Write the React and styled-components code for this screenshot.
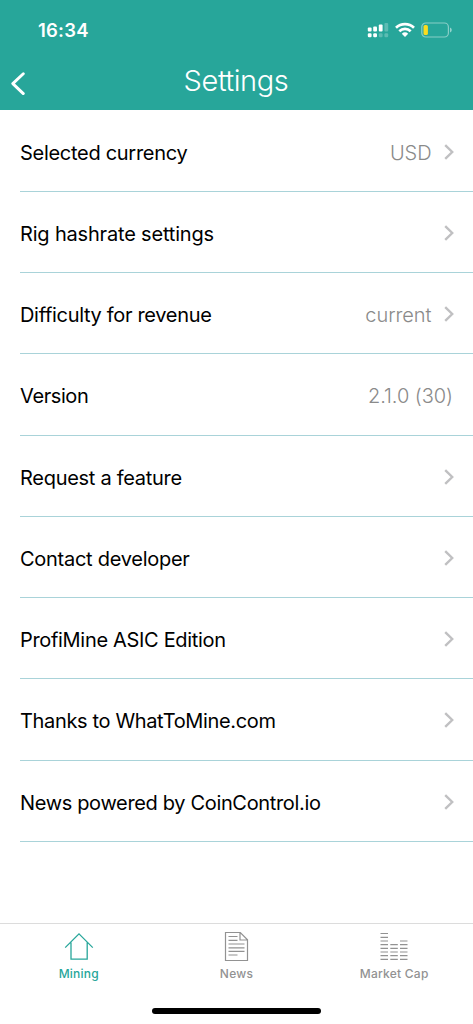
import React, { Component } from 'react';
import styled, { createGlobalStyle } from 'styled-components';

const GlobalStyle = createGlobalStyle`
    body {
        margin: 0;
        background: #fff;
        font-family: Inter, "Liberation Sans", sans-serif;
    }
`;

const Screen = styled.div`
    display: flex;
    flex-direction: column;
    height: 1024px;
    overflow: hidden;
    background: #fff;
`;

const Header = styled.header`
    height: 110px;
    background: #27a69a;
    color: #fff;
`;

const StatusBar = styled.div`
    display: flex;
    justify-content: space-between;
    align-items: center;
    height: 60px;
    padding: 0 21.5px 0 38px;
`;

const Time = styled.span`
    font-size: 18.5px;
    font-weight: 600;
    letter-spacing: 0.2px;
`;

const StatusIcons = styled.div`
    display: flex;
    align-items: center;
    gap: 6px;
    svg {
        display: block;
    }
`;

const NavBar = styled.div`
    display: grid;
    grid-template-columns: 60px 1fr 60px;
    height: 50px;
`;

const BackButton = styled.button`
    display: flex;
    align-items: flex-start;
    border: 0;
    padding: 11px 0 0 8.5px;
    background: none;
`;

const Title = styled.h1`
    margin: 0;
    text-align: center;
    font-size: 29px;
    font-weight: 300;
    line-height: 42px;
    letter-spacing: -0.4px;
    padding-right: 1px;
`;

const List = styled.ul`
    flex: 1;
    margin: 0;
    padding: 0.5px 0 0 20px;
    list-style: none;
`;

const Row = styled.li`
    display: flex;
    align-items: center;
    box-sizing: border-box;
    height: 81.25px;
    padding: 4px 20px 0 0;
    border-bottom: 1px solid #a9d3d9;
`;

const Label = styled.span`
    flex: 1;
    color: #000;
    font-size: 20px;
    letter-spacing: ${(props) => props.$spacing}px;
`;

const Value = styled.span`
    color: #8a8a8a;
    font-size: 20px;
    font-weight: 300;
    letter-spacing: -0.05px;
`;

const Chevron = styled.svg`
    display: block;
    margin: -2px -0.5px 0 12px;
`;

const TabBar = styled.nav`
    display: grid;
    grid-template-columns: repeat(3, 1fr);
    box-sizing: border-box;
    height: 79px;
    border-top: 1px solid #dcdcdc;
`;

const Tab = styled.div`
    display: flex;
    flex-direction: column;
    align-items: center;
    padding-top: 7px;
    color: ${(props) => (props.$active ? '#27a69a' : '#929292')};
    font-size: 12px;
    font-weight: 500;
    line-height: 16px;
    letter-spacing: 0.25px;
    svg {
        display: block;
        margin-bottom: 5px;
    }
`;

const HomeArea = styled.div`
    display: flex;
    justify-content: center;
    height: 22px;
    padding-top: 6px;
    box-sizing: border-box;
`;

const HomeIndicator = styled.div`
    width: 169px;
    height: 6px;
    border-radius: 3px;
    background: #000;
`;

const rows = [
    { label: 'Selected currency', value: 'USD', link: true, spacing: -0.29 },
    { label: 'Rig hashrate settings', link: true, spacing: -0.18 },
    { label: 'Difficulty for revenue', value: 'current', link: true, spacing: -0.32 },
    { label: 'Version', value: '2.1.0 (30)', spacing: -0.4 },
    { label: 'Request a feature', link: true, spacing: -0.28 },
    { label: 'Contact developer', link: true, spacing: -0.27 },
    { label: 'ProfiMine ASIC Edition', link: true, spacing: -0.32 },
    { label: 'Thanks to WhatToMine.com', link: true, spacing: -0.35 },
    { label: 'News powered by CoinControl.io', link: true, spacing: -0.34 },
];

const SignalIcon = () => (
    <svg width="22" height="16" viewBox="0 0 22 16" fill="#fff">
        <rect x="0.8" y="5.6" width="3.8" height="4" rx="1" />
        <rect x="6.2" y="4.6" width="3.8" height="5" rx="1" />
        <rect x="11.8" y="2.6" width="3.8" height="7" rx="1" />
        <rect x="17.4" y="1" width="3.8" height="8.6" rx="1" opacity="0.25" />
        <rect x="0.8" y="11.2" width="3.8" height="4" rx="1.2" />
        <rect x="6.2" y="11.2" width="3.8" height="4" rx="1.2" />
        <rect x="11.8" y="11.2" width="3.8" height="4" rx="1.2" opacity="0.25" />
        <rect x="17.4" y="11.2" width="3.8" height="4" rx="1.2" opacity="0.25" />
    </svg>
);

const WifiIcon = () => (
    <svg width="20" height="16" viewBox="0 0 20 16" fill="none" stroke="#fff" strokeWidth="2.7">
        <path d="M1 5.7C6 .9 14 .9 19 5.7" />
        <path d="M4.3 9.2C7.5 6.2 12.5 6.2 15.7 9.2" />
        <path d="M6.8 11.7Q10 8.9 13.2 11.7L10 15Z" fill="#fff" stroke="none" />
    </svg>
);

const BatteryIcon = () => (
    <svg width="31" height="16" viewBox="0 0 31 16" fill="none">
        <rect x="0.8" y="1" width="26.6" height="14" rx="4" stroke="#fff" strokeOpacity="0.45" strokeWidth="1.2" />
        <path d="M29 5.6Q30.8 6.4 30.8 8T29 10.4Z" fill="#fff" fillOpacity="0.5" />
        <rect x="2.5" y="3" width="4.4" height="10" rx="1.6" fill="#fbdc1d" />
    </svg>
);

const MiningIcon = () => (
    <svg width="30" height="30" viewBox="0 0 30 30" fill="none" stroke="currentColor" strokeWidth="1.3">
        <path d="M1.2 16.6L15 2.8L28.8 16.6M7 11.5V28.2H23.2V11.5" />
    </svg>
);

const NewsIcon = () => (
    <svg width="26" height="30" viewBox="0 0 26 30" fill="none" stroke="currentColor" strokeWidth="1.2">
        <path d="M2.5 1.5H17.3L24.5 8.8V29.5H2.5ZM17 1.5V9H24.4" />
        <path d="M5.5 5.5H14.5M5.5 9.3H14.5M5.5 13H21.5M5.5 16.8H21.5M5.5 20.4H21.5M5.5 24H14.5" />
    </svg>
);

const MarketIcon = () => (
    <svg width="28" height="30" viewBox="0 0 28 30" fill="none" stroke="currentColor" strokeWidth="1.2">
        <path d="M.5 2.5H8M.5 6.3H8M.5 10H8M.5 13.7H8M.5 17.4H8M.5 21H8M.5 24.7H8M.5 28.3H8" />
        <path d="M10.3 13.7H17.8M10.3 17.4H17.8M10.3 21H17.8M10.3 24.7H17.8M10.3 28.3H17.8" />
        <path d="M20 10H27.5M20 13.7H27.5M20 17.4H27.5M20 21H27.5M20 24.7H27.5M20 28.3H27.5" />
    </svg>
);

class App extends Component {
    render() {
        return (
            <Screen>
                <GlobalStyle />
                <Header>
                    <StatusBar>
                        <Time>16:34</Time>
                        <StatusIcons>
                            <SignalIcon />
                            <WifiIcon />
                            <BatteryIcon />
                        </StatusIcons>
                    </StatusBar>
                    <NavBar>
                        <BackButton aria-label="Back">
                            <svg width="16" height="24" viewBox="0 0 16 24" fill="none" stroke="#fff" strokeWidth="2.9" strokeLinecap="round" strokeLinejoin="round">
                                <path d="M14.3 2.8L3.8 12.6L14.3 22.6" />
                            </svg>
                        </BackButton>
                        <Title>Settings</Title>
                    </NavBar>
                </Header>
                <List>
                    {rows.map(({ label, value, link, spacing }) => (
                        <Row key={label}>
                            <Label $spacing={spacing}>{label}</Label>
                            {value && <Value>{value}</Value>}
                            {link && (
                                <Chevron width="10" height="16" viewBox="0 0 10 16" fill="none" stroke="#c0c0c2" strokeWidth="2.4">
                                    <path d="M1.2 1.2L8.2 8L1.2 14.8" />
                                </Chevron>
                            )}
                        </Row>
                    ))}
                </List>
                <TabBar>
                    <Tab $active>
                        <MiningIcon />
                        Mining
                    </Tab>
                    <Tab>
                        <NewsIcon />
                        News
                    </Tab>
                    <Tab>
                        <MarketIcon />
                        Market Cap
                    </Tab>
                </TabBar>
                <HomeArea>
                    <HomeIndicator />
                </HomeArea>
            </Screen>
        );
    }
}
export default App;
